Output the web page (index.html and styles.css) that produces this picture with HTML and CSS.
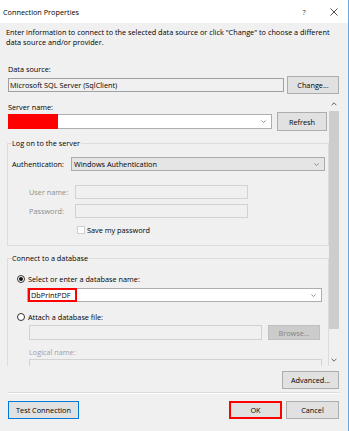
FILE: index.html
```html
<!DOCTYPE html>
<html>
<head>
<meta charset="utf-8">
<link rel="stylesheet" href="styles.css">
</head>
<body>
<div class="window">
  <div class="titlebar">
    <span class="title">Connection Properties</span>
    <span class="help">?</span>
    <span class="close"><svg width="8" height="8" viewBox="0 0 8 8"><path d="M0.5 0.5 L7.5 7.5 M7.5 0.5 L0.5 7.5" stroke="#222" stroke-width="0.8" fill="none"/></svg></span>
  </div>
  <div class="body">
    <p class="intro">Enter information to connect to the selected data source or click "Change" to choose a different<br>data source and/or provider.</p>
    <div class="label">Data source:</div>
    <div class="row row-source">
      <div class="textbox readonly">Microsoft SQL Server (SqlClient)</div>
      <button class="btn btn-change">Change...</button>
    </div>
    <div class="scrollview">
      <div class="scroll-content">
        <div class="label label-server">Server name:</div>
        <div class="row row-server">
          <div class="combo combo-server">
            <span class="redacted"></span>
            <span class="combo-text"></span>
            <svg class="chev" width="5" height="3" viewBox="0 0 5 3"><path d="M0.4 0.5 L2.5 2.5 L4.6 0.5" stroke="#777" stroke-width="0.8" fill="none"/></svg>
          </div>
          <button class="btn btn-refresh">Refresh</button>
        </div>
        <fieldset class="group group-logon">
          <legend>Log on to the server</legend>
          <div class="row row-auth">
            <span class="auth-label">Authentication:</span>
            <div class="combo combo-auth">
              <span class="combo-text">Windows Authentication</span>
              <svg class="chev" width="5" height="3" viewBox="0 0 5 3"><path d="M0.4 0.5 L2.5 2.5 L4.6 0.5" stroke="#777" stroke-width="0.8" fill="none"/></svg>
            </div>
          </div>
          <div class="row row-cred row-user">
            <span class="cred-label">User name:</span>
            <div class="textbox disabled cred-input"></div>
          </div>
          <div class="row row-cred row-pass">
            <span class="cred-label">Password:</span>
            <div class="textbox disabled cred-input"></div>
          </div>
          <div class="row row-check">
            <span class="checkbox"></span>
            <span class="check-text">Save my password</span>
          </div>
        </fieldset>
        <fieldset class="group group-db">
          <legend>Connect to a database</legend>
          <div class="row row-radio row-radio1">
            <span class="radio checked"></span>
            <span>Select or enter a database name:</span>
          </div>
          <div class="combo combo-db">
            <span class="db-name">DbPrintPDF</span>
            <span class="combo-text"></span>
            <svg class="chev" width="5" height="3" viewBox="0 0 5 3"><path d="M0.4 0.5 L2.5 2.5 L4.6 0.5" stroke="#777" stroke-width="0.8" fill="none"/></svg>
          </div>
          <div class="row row-radio row-radio2">
            <span class="radio"></span>
            <span>Attach a database file:</span>
          </div>
          <div class="row row-file">
            <div class="textbox disabled file-input"></div>
            <button class="btn btn-browse">Browse...</button>
          </div>
          <div class="logical-label">Logical name:</div>
          <div class="textbox disabled logical-input"></div>
          <div class="tail"></div>
        </fieldset>
      </div>
      <div class="scrollbar">
        <span class="sb-arrow sb-up"><svg width="6" height="4" viewBox="0 0 6 4"><path d="M0.6 3.2 L3 0.8 L5.4 3.2" stroke="#555" stroke-width="0.9" fill="none"/></svg></span>
        <span class="sb-thumb"></span>
        <span class="sb-track"></span>
        <span class="sb-arrow sb-down"><svg width="6" height="4" viewBox="0 0 6 4"><path d="M0.6 0.8 L3 3.2 L5.4 0.8" stroke="#555" stroke-width="0.9" fill="none"/></svg></span>
      </div>
    </div>
    <div class="row row-advanced">
      <button class="btn btn-advanced">Advanced...</button>
    </div>
    <div class="separator"></div>
    <div class="row row-footer">
      <button class="btn btn-test">Test Connection</button>
      <span class="spacer"></span>
      <button class="btn btn-ok">OK</button>
      <button class="btn btn-cancel">Cancel</button>
    </div>
  </div>
</div>
</body>
</html>
```

FILE: styles.css
```css
* { box-sizing: border-box; }
html, body { margin: 0; padding: 0; }
body {
  width: 349px;
  height: 431px;
  overflow: hidden;
  background: #f0f0f0;
  font-family: "Open Sans", "Noto Sans", sans-serif;
  font-size: 7.3px;
  line-height: 10px;
  color: #000;
}
.window {
  width: 349px;
  height: 431px;
  background: #f0f0f0;
  border-right: 1px solid #6aa6dc;
  display: flex;
  flex-direction: column;
}
.titlebar {
  height: 23px;
  flex: none;
  background: #fff;
  display: flex;
  align-items: center;
  padding: 0 7px 0 3px;
}
.title { flex: 1; }
.help { width: 14px; text-align: center; color: #333; }
.close { width: 14px; margin-left: 16px; display: flex; justify-content: center; }
.body {
  flex: 1;
  display: flex;
  flex-direction: column;
  padding: 0 9px 0 8px;
}
.intro { margin: 4px 0 0 -2px; }
.label { margin-top: 17px; }
.row { display: flex; align-items: center; }
.row-source { margin-top: 2px; height: 18px; gap: 3px; }
.textbox {
  height: 14px;
  border: 1px solid #abadb3;
  background: #fff;
  padding: 0 1px;
  display: flex;
  align-items: center;
  white-space: nowrap;
}
.textbox.readonly { flex: 1; background: #f0f0f0; border-color: #a0a0a0; }
.textbox.disabled { background: #f0f0f0; border-color: #d2d2d2; }
.btn {
  font: inherit;
  color: #000;
  height: 18px;
  padding: 0;
  background: #e1e1e1;
  border: 1px solid #adadad;
  text-align: center;
}
.btn-change { width: 52px; }

.scrollview {
  margin: 4px 0 0 -1px;
  height: 268px;
  display: flex;
  flex: none;
}
.scroll-content {
  width: 322px;
  overflow: hidden;
}
.label-server { margin-top: 4px; padding-left: 1px; }
.row-server { height: 19px; padding-left: 1px; gap: 5px; }
.combo {
  display: flex;
  align-items: center;
  height: 15px;
  border: 1px solid #abadb3;
  background: #fff;
}
.combo-text { flex: 1; white-space: nowrap; }
.chev { margin: 0 5px 0 3px; flex: none; }
.combo-server { width: 264px; }
.redacted {
  width: 50px;
  align-self: stretch;
  margin: -1px 0 -1px -1px;
  background: #ff0000;
}
.btn-refresh { width: 50px; height: 19px; }

.group {
  margin: 7px 0 0 0;
  width: 322px;
  border: 1px solid #dcdcdc;
  padding: 9px 3px 10px 4px;
}
.group legend { padding: 0 1px 0 0; line-height: 10px; }
.row-auth { height: 14px; }
.auth-label { width: 59px; flex: none; }
.combo-auth {
  flex: 1;
  height: 14px;
  background: #e5e5e5;
  border-color: #acacac;
  padding-left: 2px;
}
.row-user { margin-top: 14px; }
.row-pass { margin-top: 5px; }
.cred-label { width: 63px; padding-left: 17px; color: #8e8e8e; flex: none; }
.cred-input { width: 173px; }
.row-check { margin-top: 7px; height: 10px; padding-left: 65px; }
.checkbox {
  width: 8px; height: 8px;
  border: 1px solid #cfcfcf;
  background: #fff;
  margin-right: 2px;
}
.check-text { color: #000; }

.group-db { padding: 11px 6px 0 4px; }
.row-radio { height: 10px; }
.radio {
  width: 8px; height: 8px;
  border-radius: 50%;
  border: 1px solid #333;
  background: #fff;
  margin: 0 3px 0 5px;
  display: flex;
  align-items: center;
  justify-content: center;
}
.radio.checked::after {
  content: "";
  width: 4px; height: 4px;
  border-radius: 50%;
  background: #111;
}
.combo-db { margin: 4px 0 0 15px; height: 14px; }
.db-name {
  width: 49px;
  height: 14px;
  border: 2px solid #ff0000;
  margin: -1px 0 -1px 0;
  padding-left: 1px;
  display: flex;
  align-items: center;
}
.row-radio2 { margin-top: 10px; }
.row-file { margin-top: 3px; height: 15px; padding-left: 17px; gap: 6px; }
.file-input { width: 233px; height: 15px; }
.btn-browse {
  width: 52px; height: 15px;
  background: #cccccc;
  border-color: #bfbfbf;
  color: #838383;
}
.logical-label { margin-top: 7px; padding-left: 17px; color: #a0a0a0; }
.logical-input { margin: 2px 0 0 17px; }
.tail { height: 40px; }

.scrollbar {
  width: 10px;
  display: flex;
  flex-direction: column;
  background: #f0f0f0;
}
.sb-arrow { height: 12px; display: flex; align-items: center; justify-content: center; flex: none; }
.sb-thumb { margin-top: 1px; height: 218px; background: #cdcdcd; flex: none; }
.sb-track { flex: 1; }

.row-advanced { margin-top: 5px; justify-content: flex-end; }
.btn-advanced { width: 57px; }
.separator {
  margin-top: 3px;
  border-top: 1px solid #d9d9d9;
  border-bottom: 1px solid #ffffff;
}
.row-footer { margin-top: 7px; }
.spacer { flex: 1; }
.btn-test { width: 71px; border-color: #0078d7; }
.btn-ok { width: 53px; border: 2px solid #ff0000; }
.btn-cancel { width: 53px; margin-left: 4px; }
```
